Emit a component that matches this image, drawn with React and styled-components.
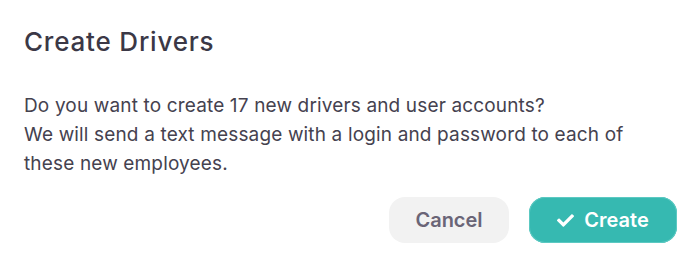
import { createGlobalStyle, styled } from "styled-components";
import { FaCheck } from "react-icons/fa";

const GlobalStyle = createGlobalStyle`
  body {
    margin: 0;
    background: #ffffff;
    font-family: Inter, "Noto Sans", sans-serif;
  }
`;

const Dialog = styled.div`
  width: 698px;
  height: 266px;
  box-sizing: border-box;
  padding: 25px 21px 0 24px;
  display: flex;
  flex-direction: column;
`;

const Title = styled.h2`
  margin: 0;
  font-size: 26px;
  font-weight: 500;
  color: #3b3846;
  line-height: 34px;
  letter-spacing: 0.8px;
`;

const Message = styled.p`
  margin: 32px 0 0;
  font-size: 19px;
  line-height: 29px;
  color: #45424f;
  letter-spacing: 0.15px;
  width: 615px;
`;

const Actions = styled.div`
  display: flex;
  justify-content: flex-end;
  gap: 20px;
  margin-top: 19px;
`;

const Button = styled.button`
  height: 46px;
  border: none;
  border-radius: 16px;
  padding: 0;
  width: ${(p) => p.$width}px;
  display: flex;
  align-items: center;
  justify-content: center;
  gap: 10px;
  font-family: Inter, "Noto Sans", sans-serif;
  font-size: 20px;
  font-weight: 600;
  background: ${(p) => (p.$primary ? "#36b9b1" : "#f2f2f2")};
  color: ${(p) => (p.$primary ? "#ffffff" : "#6a6577")};
  box-shadow: ${(p) => (p.$primary ? "0 0 0 1px #5cc9c2 inset" : "none")};
`;

export default function App() {
  return (
    <>
      <GlobalStyle />
      <Dialog>
        <Title>Create Drivers</Title>
        <Message>
          Do you want to create 17 new drivers and user accounts?
          <br />
          We will send a text message with a login and password to each of
          these new employees.
        </Message>
        <Actions>
          <Button $width={120}>Cancel</Button>
          <Button $primary $width={148}>
            <FaCheck size={17} />
            Create
          </Button>
        </Actions>
      </Dialog>
    </>
  );
}
